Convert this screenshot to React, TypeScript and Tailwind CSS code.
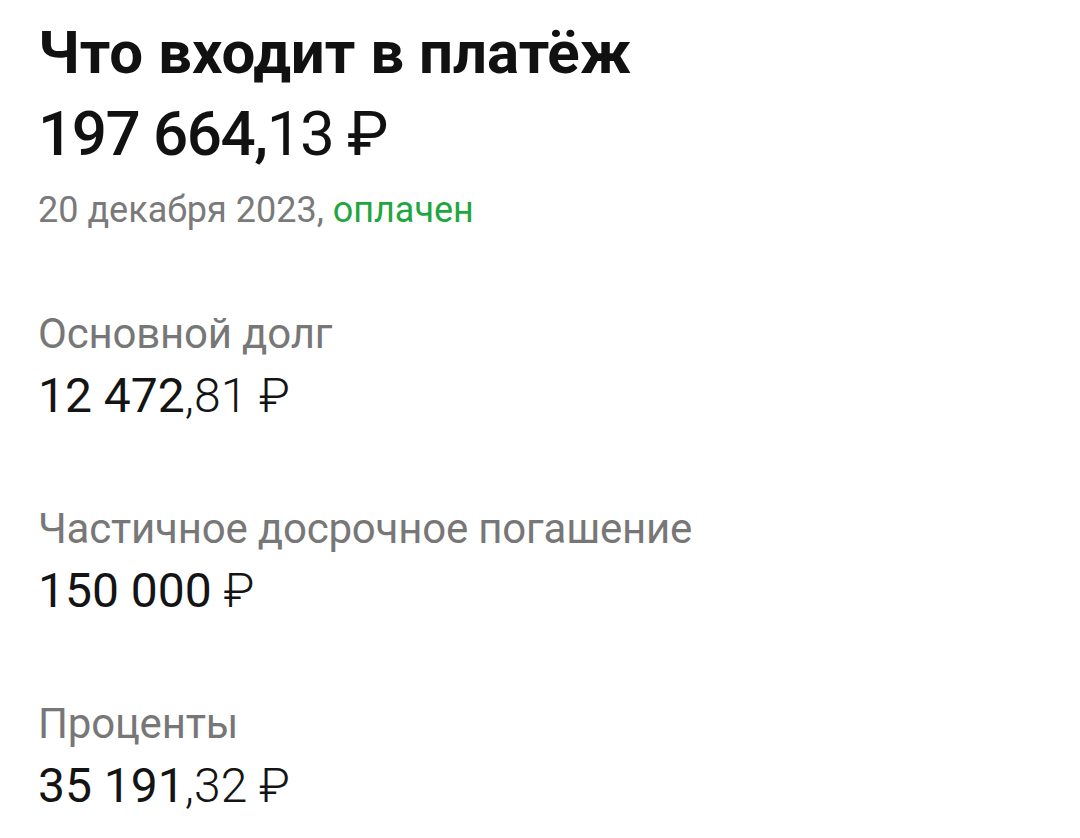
import React from "react";

type Item = {
  label: string;
  whole: string;
  fraction?: string;
};

const items: Item[] = [
  { label: "Основной долг", whole: "12 472", fraction: "81" },
  { label: "Частичное досрочное погашение", whole: "150 000" },
  { label: "Проценты", whole: "35 191", fraction: "32" },
];

function Amount({ whole, fraction }: { whole: string; fraction?: string }) {
  return (
    <div className="text-[48px] leading-[56px] text-[#141414]">
      <span className="font-normal">{whole}</span>
      {fraction && <span className="font-light">,{fraction}</span>}
      <span className="font-light"> ₽</span>
    </div>
  );
}

export default function App() {
  return (
    <div
      className="w-[1080px] h-[838px] bg-white overflow-hidden pl-[38px] pt-[18px]"
      style={{ fontFamily: "Roboto, 'Noto Sans', sans-serif" }}
    >
      <h1 className="text-[60px] leading-[70px] font-bold text-[#111]">
        Что входит в платёж
      </h1>
      <div className="mt-[11px] text-[62px] leading-[70px] tracking-[-1.5px] text-[#111]">
        <span className="font-medium">197 664,</span>
        <span className="font-normal">13 ₽</span>
      </div>
      <div className="mt-[19px] text-[36px] leading-[44px] text-[#7a7a7a]">
        20 декабря 2023, <span className="text-[#1fa640]">оплачен</span>
      </div>
      <div className="mt-[77px] flex flex-col gap-[80px]">
        {items.map((item) => (
          <div key={item.label} className="flex flex-col gap-[9px]">
            <div className="text-[42px] leading-[50px] tracking-[-0.2px] text-[#777]">
              {item.label}
            </div>
            <Amount whole={item.whole} fraction={item.fraction} />
          </div>
        ))}
      </div>
    </div>
  );
}
